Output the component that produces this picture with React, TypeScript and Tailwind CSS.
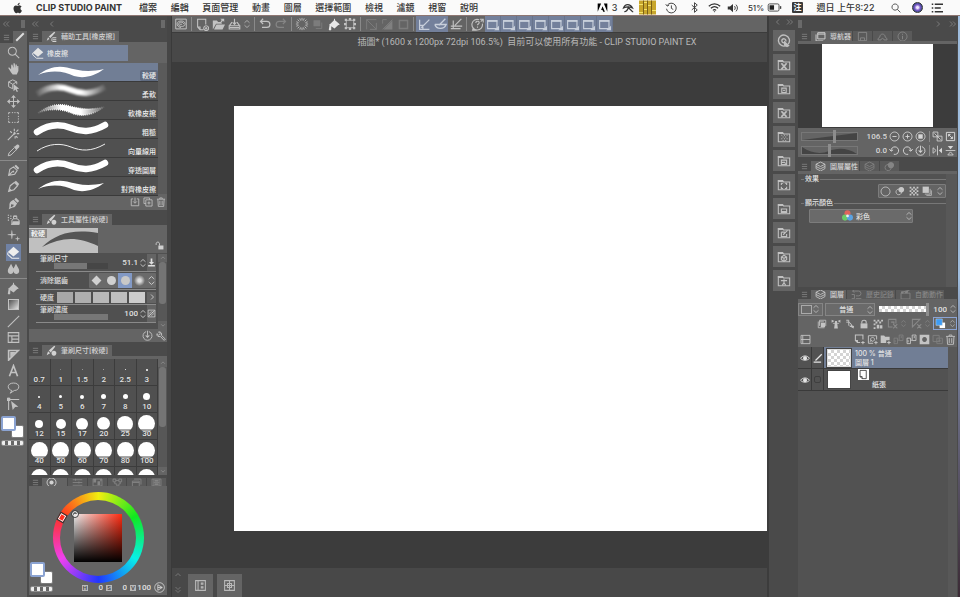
import { useState, type ReactNode } from "react";
import clsx from "clsx";

type Glyph = { s?: string; f?: string; w?: number };

// 16x16 grid: s = stroked path, f = filled path
const GLYPHS: Record<string, Glyph> = {
  apple: { f: "M11.3 8.500c0-1.700 1.400-2.500 1.500-2.600-.9-1.200-2.100-1.400-2.600-1.400-1.100-.1-2.100.7-2.700.7s-1.400-.7-2.300-.6C3.500 4.600 2 6 2 8.800 2 11.500 4 15 5.600 15c.9 0 1.200-.6 2.300-.6s1.400.6 2.300.6c1.300 0 2.600-2.200 3-3.700-.1 0-1.900-.8-1.900-2.800zM9.500 3.300c.5-.6.9-1.400.8-2.300-.8 0-1.700.5-2.200 1.200-.5.5-.9 1.400-.8 2.200.8.1 1.700-.5 2.200-1.100z" },
  adobe: { f: "M1 2h5L1 14zM15 2h-5l5 12zM8 6l3.500 8H9l-1-2.500H6z" },
  umbrella: { s: "M2 8C4 2 11 2 14 8c-4-2-8-2-12 0zM9 6c-1 4-3 7-6 7M9 8l5 5h1", w: 1.6 },
  clock: { s: "M3 4.500A6.500 6.500 0 1 1 2 9M1 3l2 2.500L5.500 4M8.500 4.500V8.500L11 10" },
  bluetooth: { s: "M4 4.500l8 7L8 15V1l4 3.500-8 7", w: 1.3 },
  wifi: { s: "M1 6.500c4-4 10-4 14 0M3.500 9c3-2.800 6-2.800 9 0M6 11.500c1.300-1.200 2.700-1.200 4 0", f: "M7 12.500h2L8 14z", w: 1.5 },
  volume: { f: "M1 6h3l4-3.500v11L4 10H1z", s: "M10 5.500c1.300 1.500 1.300 3.500 0 5M12 3.500c2.500 2.500 2.500 6.500 0 9" },
  search: { s: "M6.500 1.500a5 5 0 1 0 .1 0M10 10l5 5", w: 1.3 },
  list: { s: "M5 3h11M5 8h8M5 13h11M1 3h2M1 8h2M1 13h2", w: 1.8 },
  menu: { s: "M2 3h12M2 8h12M2 13h12", w: 1.5 },
  left: { s: "M10 3L5 8l5 5", w: 1.5 },
  right: { s: "M6 3l5 5-5 5", w: 1.5 },
  up: { s: "M3 10l5-5 5 5", w: 1.7 },
  down: { s: "M3 6l5 5 5-5", w: 1.7 },
  left2: { s: "M8 3L3 8l5 5M14 3L9 8l5 5", w: 1.5 },
  right2: { s: "M2 3l5 5-5 5M8 3l5 5-5 5", w: 1.5 },
  down2: { s: "M3 2l5 5 5-5M3 8l5 5 5-5", w: 1.5 },
  updown: { s: "M3 5.500L8 1l5 4.500M3 10.500L8 15l5-4.500", w: 1.5 },
  hand: { f: "M5 9L2.500 6.500 1.500 7.500 5 13l2 2.500h5L14 11V5h-1.500v3L12 3h-1.500v4.500L9.500 1.500H8L8 7.500 6.500 3 5.200 3.500z" },
  cube: { s: "M7 1l5 2.500v3M7 1L2 3.500v6L7 12V6.500L2 3.500M7 6.500l5-3", f: "M8 6l7 6-3 .3 1.500 3-1.500.7-1.500-3L8 15z" },
  move: { s: "M8 2v12M2 8h12", f: "M8 0l3 3.500H5zM8 16l3-3.500H5zM0 8l3.500-3v6zM16 8l-3.500-3v6z" },
  marquee: { s: "M2 4V2h2M6 2h1.500M9 2h1.500M12 2h2v2M14 6v1.500M14 9v1.500M14 12v2h-2M10.500 14H9M7.500 14H6M4 14H2v-2M2 10.500V9M2 7.500V6" },
  wand: { s: "M1 15L9 7M9 1v3M4 4l2 2M15 7h-3M14 2l-2.500 2.500M10 10v3M13 12l-2-2", f: "M7.500 6L9.500 4.500 11 6.500 9.500 8.500z", w: 1.4 },
  dropper: { s: "M8.500 5L2.500 11l-1 3.500L5 13.500l6-6", f: "M8 3.500l1.500-.5L12 1c2-1 4 1 3 3l-2.500 2.500L12 8z", w: 1.2 },
  pen: { s: "M2 14l1.500-7.500L8 3.500 12.500 8l-3 4.500zM2 14l5-5", f: "M9 2.500L11 1l4 4-1.500 2zM6.500 8.500l2-.5.500 2-2 .5z", w: 1.3 },
  pencil: { s: "M2 14l2-7 5-4 4 4-4.500 5z", f: "M9 2.500L11 1l4 4-1.500 2zM2 14l1.300-4 3 3z", w: 1.4 },
  brush: { f: "M9 3l2-2 4 4-2 2zM3 9c0-3 3-4 5-5.500l4.500 4.500C11 10 10 13 7 13l-5 2c1-1 1-3 1-6zM5 9c0 2 0 2.500-.5 3.500C7 12 8 11 8.500 9.500z" },
  airbrush: { s: "M5 14h10v-4c0-2-2-3-5-3s-4 1-4 3v4M8 7V4h4v3", f: "M7 10h8v4H6zM8 3h4v1.500H8zM1 2h1.500v1.500H1zM4 3h1.500v1.500H4zM1 5h1.500v1.500H1zM4 6h1.500v1.500H4zM1 8h1.500v1.500H1z" },
  sparkle: { f: "M6 1l.8 5.200L12 7l-5.200.8L6 13l-.8-5.200L0 7l5.200-.8zM13 9l.5 2.500L16 12l-2.500.5L13 15l-.5-2.500L10 12l2.500-.5z", s: "M6 2v10M1 7h10M13 9.500v5M10.500 12h5", w: 0.7 },
  eraser: { f: "M8 1l7 6-7 6-7-5.500z", s: "M1 8v2.500L6 15h9", w: 1.3 },
  blend: { f: "M5 2C3 6 1 8 1 11c0 5 7 5 7 0 0 5 7 5 7 0 0-3-2-5-4-9-1 2-2 4-3 6C7 6 6 4 5 2z" },
  bucket: { f: "M2 8l6-6 6 5.500-6 5.500-4-3v4c0 1.500-3 1.500-3 0z", s: "M8 1v5M2 8h12", w: 1.2 },
  line: { s: "M1 15L15 1", w: 1.3 },
  frame: { s: "M1.500 2h13v12h-13zM1.500 6h13M6 6v8M6 10h8.500", w: 1.3 },
  ruler: { s: "M2 3h12L2 15zM5 6h3L5 9z", w: 2 },
  text: { s: "M3 15L8 2l5 13M5 10.500h6", w: 2 },
  balloon: { s: "M8 2.500C4 2.500 1.500 4.500 1.500 7S4 11.500 6 11.700L4 15l5-3.300c3.500 0 5.500-2 5.500-4.700S12 2.500 8 2.500z", w: 1.2 },
  operate: { s: "M2 1v15M2 3h13", f: "M0 1h4v4H0zM5 5l9 7-4 .3L7 16z", w: 1.3 },
  subtool: { f: "M1 14l2-5 2 2.500zM4 8l8-7 1.500 1L6.500 10zM8 9h7v1.500H8zM10 12h5v1.500h-5zM8 9h1.300v7H8zM8 14.700h7V16H8z" },
  brushdot: { f: "M1 15l2-6 3 3zM4 8l8-7 1.500 1L7 11zM11.500 8.500a3.500 3.500 0 1 0 .1 0z" },
  spiral: { s: "M1 1.500h14v13H1zM11.500 8c0-3-6-3.500-6.500 0s5 4 7 2.500c3-2.500 1-6.500-3.500-6.500S2.500 6.500 3 9s3 3.500 5 3.500M9 9c0-1.500-2-1.500-2 0", w: 1.3 },
  filenew: { s: "M9 14.500H5L2 11V1.500h10V8M2 11h3v3.500M12.500 9.500a3 3 0 1 0 .1 0M12.500 11v3M11 12.500h3", w: 1.3 },
  open: { f: "M1 14V3h5l1.500 2H12v2H5zM5.500 8H16l-3 6H2.500zM10 1l5 0 0 4-1.500-1.500-2 2L10.500 4 12 2.500z" },
  save: { s: "M2 9l3-4M14 9l-3-4M1.500 9.500h13v4h-13zM8 1v6", f: "M5 5.500h6L8 9zM2 11h12v1.200H2z", w: 1.4 },
  undo: { s: "M2 4.500h8.500a4 4 0 0 1 0 8H4M5.500 1L2 4.500 5.500 8", w: 1.6 },
  redo: { s: "M14 4.500H5.500a4 4 0 0 0 0 8H12M10.500 1L14 4.500 10.500 8", w: 1.6 },
  dots: { s: "M8 1v3M8 12v3M1 8h3M12 8h3M3 3l2 2M11 11l2 2M13 3l-2 2M5 11l-2 2M5.500 1.500l.8 2.500M10.500 1.500l-.8 2.500M5.500 14.500l.8-2.500M10.500 14.500l-.8-2.500M1.500 5.500l2.500.8M1.500 10.500l2.500-.8M14.500 5.500l-2.500.8M14.500 10.500l-2.500-.8", w: 1 },
  copyout: { f: "M2 3h9v8H2z", s: "M13 6v8H5", w: 1.2 },
  transform: { s: "M3 3h10v10H3z", f: "M1 1h3v3H1zM12 1h3v3h-3zM1 12h3v3H1zM12 12h3v3h-3zM6.500 0h3v3h-3zM6.500 13h3v3h-3zM0 6.500h3v3H0zM13 6.500h3v3h-3z", w: 1.2 },
  desel: { s: "M2 14V2h12M2 2l12 12M14 6v8H6", w: 1 },
  invsel: { f: "M14 3v11H3z", s: "M2 2h5M2 2v5M14 2L2 14", w: 1 },
  selbox: { s: "M3 3h10v10H3z", w: 1.8 },
  snap1: { s: "M2 2v12h12M4 12L14 2M2 9h4v5", w: 1.5 },
  snap2: { s: "M1 8c2 6 11 7 14 0H1M6 9l8-8", w: 1.6 },
  snap3: { s: "M4 3v10M1 10h14M6 9l8-8M1 13h12", w: 1.4 },
  help: { s: "M10 2.200A6.500 6.500 0 1 0 14 7M3 11.500L2 15h5M6 6c0-3 4.500-2.500 4 0-.3 1.500-2 1.500-2 3M8 10.500V12M11 1.500h4v4M15 1.500L12 4.500", w: 1.4 },
  screen: { s: "M2 3.500h11.500v9.500H2z", f: "M10 15h6V9.500zM1.500 2.500h12.500v2H1.500z", w: 1.4 },
  dl: { s: "M2 3h3M11 3h3v11H2V3M8 1v8M5 7l3 3 3-3", w: 1.3 },
  dup: { s: "M1.500 1.500h9v3M1.500 1.500v9h3M4.500 4.500h10v10h-10zM9.500 7v5M7 9.500h5", w: 1.3 },
  trash: { s: "M1.500 3.500h13M6 3V1.500h4V3M3 4l.7 11h8.600L13 4M6.200 6v7M9.800 6v7", w: 1.3 },
  unlock: { s: "M2 7V5c0-4 6-4 6 0v3", f: "M6 8h9v7H6z", w: 1.6 },
  stamp: { f: "M6.500 1h3v6h3L8 12 3.500 7h3zM2 12.500h12V15H2z" },
  nocircle: { s: "M2 2h12v12H2zM3 13L13 3M8 5a3 3 0 1 0 .1 0", w: 1.2 },
  reset: { s: "M10 2.300A6.500 6.500 0 1 1 6 2.300M8 8V1", f: "M4.500 8h7L8 11.500z", w: 1.3 },
  wrench: { s: "M4 1.500L7 4.500 4.500 7 1.500 4.200C.5 8 4 10 7 8.700L13 15l2-2-6.300-6C10 4 7.500.5 4 1.500z", w: 1.5 },
  rings: { s: "M8 1.500a6.500 6.500 0 1 0 .1 0", f: "M8 5a3 3 0 1 0 .1 0", w: 1.4 },
  sliders: { s: "M1 4h14M1 8h14M1 12h14M5 2.500v3M10 6.500v3", w: 1.2 },
  swatch: { s: "M1.500 3h13v10h-13z", f: "M2 3h4v5H2zM8 6h4v6H8zM12 3h2v3h-2z", w: 1.2 },
  nodes: { s: "M1.500 3h4v4h-4zM10 3h4v4h-4zM5.500 5h4.500M4 7v3h3v3h3v-3h2V7", w: 1.3 },
  stack: { s: "M4.500 3h10v8M2 6h10v8H2zM2 8h10", w: 1.3 },
  film: { s: "M1.500 3h13v10h-13zM4 3v10M12 3v10M4 8h8", f: "M5 4h6v3H5zM5 9h6v3H5z", w: 1.2 },
  play: { s: "M8 1a7 7 0 1 0 .1 0M5.500 4L12 8l-6.500 4zM5.500 8H12", w: 1.1 },
  quick: { s: "M12.800 11.500A6.300 6.300 0 1 0 11 13M10 8.500A2.300 2.300 0 1 0 8 10", f: "M8 7.500l6.500 6-3 1.500-3.500-2z", w: 1.5 },
  nav: { s: "M4 2.500h10.500v9H4zM1.500 5v9.500h10.500M4 4.500h10.500", w: 1.4 },
  subview: { s: "M2 2h12v12H2zM5 14v-4h6v4", w: 1.4 },
  info: { s: "M8 1.500a6.500 6.500 0 1 0 .1 0M8 7v5M8 4v1.500", w: 1.4 },
  arch: { s: "M1.500 13v-2L4 9c0-6 8-6 8 0l2.500 2v2H10c0-3-4-3-4 0z", w: 1.4 },
  minusc: { s: "M8 1.500a6.500 6.500 0 1 0 .1 0M5 8h6", w: 1.3 },
  plusc: { s: "M8 1.500a6.500 6.500 0 1 0 .1 0M5 8h6M8 5v6", w: 1.3 },
  fitc: { s: "M8 1.500a6.500 6.500 0 1 0 .1 0", f: "M4.800 4.800h6.400v6.400H4.800z", w: 1.3 },
  fit: { s: "M1.500 1.500h7v7h-7zM7.500 7.500h7v7h-7zM3.500 3.500l9 9", w: 1.2 },
  corner: { s: "M2 2h12v12H2zM5 5l6 6M5 8V5h3M8 11h3V8", w: 1.4 },
  rotl: { s: "M7 13.500A5.500 5.500 0 1 0 3 8.500M.5 6L3 9l3-2", w: 1.4 },
  rotr: { s: "M9 13.500A5.500 5.500 0 1 1 13 8.500M15.500 6L13 9l-3-2", w: 1.4 },
  fliph: { s: "M8 1v14M1.500 4v8L6 8z", f: "M14.500 4v8L10 8z", w: 1.2 },
  flipv: { s: "M1 8h14M4 14.500h8L8 10z", f: "M4 1.500h8L8 6z", w: 1.2 },
  layers: { s: "M8 1.500l6.500 3.200L8 8 1.500 4.700zM1.500 8L8 11.300 14.500 8M1.500 11L8 14.500 14.500 11M1.500 4.700V11M14.500 4.700V11", w: 1.1 },
  circle: { s: "M8 1.500a6.500 6.500 0 1 0 .1 0", w: 1.3 },
  tone: { s: "M6 5a4.500 4.500 0 1 0 .1 0", f: "M10 1.500a4.500 4.500 0 1 0 .1 0", w: 1.3 },
  checker: { f: "M1 1h2.800v2.800H1zM6.600 1h2.800v2.800H6.600zM12.200 1H15v2.800h-2.800zM3.800 3.800h2.800v2.800H3.800zM9.400 3.800h2.800v2.800H9.400zM1 6.600h2.800v2.800H1zM6.600 6.600h2.800v2.800H6.600zM12.200 6.600H15v2.800h-2.800zM3.800 9.400h2.800v2.800H3.800zM9.400 9.400h2.800v2.800H9.400zM1 12.200h2.800V15H1zM6.600 12.200h2.800V15H6.600zM12.200 12.200H15V15h-2.800z" },
  layercolor: { f: "M1 1h10v10H1z", s: "M13 4.500v8.500H4.500M15 7v8H7", w: 1.2 },
  history: { s: "M3 3h8a3.500 3.500 0 0 1 0 7H7M5 1L2 3l3 2M1 8h4v6H1M7 14h8", w: 1.3 },
  clap: { s: "M1.500 6h13v8.500h-13zM1.500 5L14 1.500", f: "M1.500 3.500h4l-1 3h-3zM8 3h4l-1 3H7z", w: 1.3 },
  clip: { f: "M6 6h7v7H6z", s: "M4 2h10v9M4 4.500h7M2 4v10h10M4 2v9", w: 1.3 },
  lighthouse: { f: "M6.500 3h3l1.500 12H5zM1 1l4.500 2L1 6zM15 1l-4.500 2L15 6z", s: "M3 7h10" },
  draft: { s: "M2 2h4v8l2 2h6M6 5l4 3v3M2 5h4", f: "M9 9l5 2v4l-4-2z", w: 1.5 },
  lock: { s: "M4.500 7V5c0-4 7-4 7 0v2", f: "M2.500 7h11v8h-11z", w: 1.7 },
  lockpx: { f: "M1 1h3v3H1zM7 1h3v3H7zM4 4h3v3H4zM10 4h3v3h-3zM13 1h3v3h-3zM1 7h3v3H1zM6 9h4v6H6zM1 13h3v3H1zM11 10h4v5h-4z" },
  masksel: { s: "M2 2h11v6M2 2v11h6M6 6h4v3M9 9l6 6M15 9l-6 6", w: 1.5 },
  rulersel: { s: "M2 2h11L2 13zM9 9l6 6M15 9l-6 6", w: 1.5 },
  split: { s: "M1.500 2h13v12h-13zM1.500 8h13M4 2v12", w: 1.3 },
  newlayer: { s: "M9 12.500H5l-3-3v-8h11V8M13 10v5M10.500 12.500h5M2 9.500h3v3", w: 1.5 },
  newvec: { s: "M9 13.500H2v-11h12V8M13 10v5M10.500 12.500h5M8 5a2.800 2.800 0 1 0 .1 0M4 11l3-2", w: 1.4 },
  newfolder: { f: "M1 13V2h5l1.500 2H14v5H9v4z", s: "M13 10v5M10.500 12.500h5", w: 1.5 },
  transfer: { s: "M1.500 6h5v8h-5zM9 1.500h5.500v8H9zM6.500 9H9M3 9v3M12 3v3", w: 1.3 },
  mask: { f: "M1 1h14v14H1zM8 4.500a3.500 3.500 0 1 0 .1 0z" },
  applymask: { s: "M1.500 2h9v9h-9zM7 6h8v8H7zM11 8v4M9 10h4", w: 1.3 },
  eye: { s: "M1 8.500C4 3.500 12 3.500 15 8.500 12 12.500 4 12.500 1 8.500z", f: "M8 5a3.200 3.200 0 1 0 .1 0", w: 1.5 },
  edit: { s: "M1 14.500h12M4 12L14 2", w: 2 },
  nib: { s: "M2 14L14 2", w: 3 },
  paper: { s: "M3 2h9v12H6l-3-3zM3 11h3v3", w: 1.2 },
  timeline: { s: "M2 2h12v12H2zM5 2v12M9 5h2v1.500H9zM9 9.500h2V11H9z", w: 1.3 },
  grid: { s: "M2 2h12v12H2zM8 2v12M2 8h12M5.500 5.500h5v5h-5z", w: 1.3 },
};

const NUM = "[font-family:Roboto,sans-serif] text-[8px]";

function Icon({ name, className = "size-3" }: { name: string; className?: string }) {
  const g = GLYPHS[name];
  return (
    <svg viewBox="0 0 16 16" className={clsx("shrink-0", className)} aria-hidden="true">
      {g.s && <path d={g.s} fill="none" stroke="currentColor" strokeWidth={g.w ?? 1.2} />}
      {g.f && <path d={g.f} fill="currentColor" fillRule="evenodd" />}
    </svg>
  );
}

function IconButton({ name, label, className, icon }: { name: string; label: string; className?: string; icon?: string }) {
  return (
    <button aria-label={label} className={clsx("flex shrink-0 items-center justify-center", className)}>
      <Icon name={name} className={icon} />
    </button>
  );
}

const MENUS = ["檔案", "編輯", "頁面管理", "動畫", "圖層", "選擇範圍", "檢視", "濾鏡", "視窗", "說明"];

function MenuBar() {
  return (
    <header className="flex h-[16px] shrink-0 items-center justify-between border-b border-[#8d7672] bg-[#fafafa] pr-[15px] text-[9px] leading-[14px] text-[#333]">
      <nav className="flex items-center">
        <IconButton name="apple" label="Apple" className="w-[36px] text-[#333]" icon="size-[12px]" />
        <button className="w-[103px] text-left text-[9px] font-bold whitespace-nowrap">CLIP STUDIO PAINT</button>
        <div className="flex w-[339px] justify-between">
          {MENUS.map((m) => (
            <button key={m} className="whitespace-nowrap">{m}</button>
          ))}
        </div>
      </nav>
      <div className="flex items-center [&>*]:flex [&>*]:items-center [&>*]:justify-center">
        <span className="w-[20px] gap-1"><Icon name="adobe" className="size-[11px] text-black" />3</span>
        <span className="w-[22px]"><Icon name="umbrella" className="size-[12px]" /></span>
        <span className="w-[17px]">
          <svg viewBox="0 0 17 14" className="h-[15px] w-[17px]" aria-hidden="true">
            <rect width="17" height="14" fill="#c8a62c" />
            <path d="M4.500 0v14M8.500 0v14M12.500 0v14" stroke="#7a6018" strokeWidth="1" />
            <path d="M0 4h4M5 9h3M9 5h3M13 10h4M0 12h4M5 2h3" stroke="#f3e36a" strokeWidth="1" />
          </svg>
        </span>
        <span className="w-[30px]"><Icon name="clock" className="size-[12px]" /></span>
        <span className="w-[16px]"><Icon name="bluetooth" className="size-[11px]" /></span>
        <span className="w-[24px]"><Icon name="wifi" className="size-[13px]" /></span>
        <span className="w-[14px]"><Icon name="volume" className="size-[12px]" /></span>
        <span className="w-[50px] gap-[3px] text-[8px]">
          51%
          <svg viewBox="0 0 16 10" className="h-[9px] w-[15px]" aria-hidden="true">
            <rect x="1" y="1" width="12" height="8" rx="1.500" fill="none" stroke="#444" />
            <rect x="2.500" y="2.500" width="5" height="5" fill="#222" />
            <rect x="14" y="3.500" width="1.500" height="3" fill="#444" />
          </svg>
        </span>
        <span className="w-[15px]"><b className="size-[11px] rounded-[1px] bg-[#3a3a3a] text-center text-[8px] leading-[11px] text-white">注</b></span>
        <span className="w-[81px] whitespace-nowrap">週日 上午8:22</span>
        <button aria-label="搜尋" className="w-[19px]"><Icon name="search" className="size-[10px]" /></button>
        <button aria-label="Siri" className="w-[24px]">
          <span className="size-[11px] rounded-full border border-[#333] bg-[radial-gradient(circle,#f0e8ff_15%,#7a58c8_45%,#2a4a80_80%)]" />
        </button>
        <button aria-label="通知中心" className="w-[16px]"><Icon name="list" className="size-[12px]" /></button>
      </div>
    </header>
  );
}

function Tab({ icon, children, active, className }: { icon: string; children?: ReactNode; active?: boolean; className?: string }) {
  return (
    <button className={clsx("flex items-center gap-[4px] overflow-hidden border-r border-[#4a4a4a] px-[4px] whitespace-nowrap", active ? "bg-[#646464] text-[#d2d2d2]" : "bg-[#5a5a5a] text-[#858585]", className)}>
      <Icon name={icon} className="size-[11px]" />
      {children}
    </button>
  );
}

function TabRow({ children, className }: { children: ReactNode; className?: string }) {
  return (
    <div className={clsx("flex shrink-0 items-stretch border-b-[3px] border-[#646464] bg-[#4a4a4a] text-[7px]", className)}>
      <IconButton name="menu" label="面板選單" className="w-[13px] text-[#909090]" icon="size-[7px]" />
      {children}
    </div>
  );
}

const TOOLS = [
  [["search", "放大鏡"], ["hand", "移動"], ["cube", "操作"], ["move", "移動圖層"], ["marquee", "選擇範圍"], ["wand", "自動選擇"], ["dropper", "吸管"]],
  [["pen", "沾水筆"], ["pencil", "鉛筆"], ["brush", "毛筆"], ["airbrush", "噴槍"], ["sparkle", "裝飾"], ["eraser", "橡皮擦"], ["blend", "色彩混合"]],
  [["bucket", "填充"], ["gradient", "漸層"], ["line", "圖形"], ["frame", "分格邊框"], ["ruler", "尺規"], ["text", "文字"], ["balloon", "對話框"], ["operate", "線修正"]],
];

function ColorChips() {
  return (
    <div className="flex w-[25px] flex-col items-center gap-[2px]">
      <div className="relative h-[22px] w-[23px]">
        <button aria-label="副顏色" className="absolute right-0 bottom-0 size-[13px] rounded-[2px] border border-[#7c7c7c] bg-white" />
        <button aria-label="主顏色" className="absolute top-0 left-0 size-[15px] rounded-[2px] border-2 border-[#8ba3d2] bg-white" />
      </div>
      <button aria-label="透明色" className="h-[6px] w-[23px] rounded-[2px] border border-[#8d8d8d] bg-[repeating-linear-gradient(90deg,#eee_0_3px,#666_3px_6px)]" />
    </div>
  );
}

function ToolColumn() {
  const [tool, setTool] = useState("eraser");
  return (
    <aside className="flex w-[27px] shrink-0 flex-col bg-[#646464]">
      <div className="flex h-[15px] shrink-0 items-center justify-between bg-[#4a4a4a] px-[2px] text-[#8a8a8a]">
        <IconButton name="left2" label="收合" icon="size-[8px]" />
        <span className="h-[8px] w-[4px] bg-[#6a6a6a]" />
      </div>
      <div className="flex h-[12px] shrink-0 bg-[#4a4a4a]">
        <IconButton name="menu" label="面板選單" className="w-[13px] text-[#909090]" icon="size-[7px]" />
        <IconButton name="nib" label="工具" className="flex-1 bg-[#646464] text-[#ddd]" icon="size-[10px]" />
      </div>
      {TOOLS.map((group, i) => (
        <div key={i} className={clsx("flex flex-col items-center py-[1px]", i === 2 ? "h-[134px]" : "h-[118px] border-b border-[#8a8a8a]")}>
          {group.map(([name, label]) => (
            <button
              key={name}
              aria-label={label}
              aria-pressed={tool === name}
              onClick={() => setTool(name)}
              className={clsx("flex w-[15px] flex-1 items-center justify-center text-[#c2c2c2]", tool === name && "bg-[#7082a5] text-[#eee]")}
            >
              {name === "gradient" ? (
                <span className="size-[11px] border border-[#c2c2c2] bg-linear-to-br from-[#555] to-[#e0e0e0]" />
              ) : (
                <Icon name={name} className="size-[13px]" />
              )}
            </button>
          ))}
        </div>
      ))}
      <div className="pt-[3px]"><ColorChips /></div>
    </aside>
  );
}

const THICK = "M8 12C20 4 32 4 42 8S62 13 76 5";
const TAPER = "M9 12C18 5 28 2 38 4.500 48 7 58 10 75 6 66 13 55 16 45 13 36 9 24 6 9 12z";

const BRUSHES = [
  { name: "較硬", kind: "taper" },
  { name: "柔軟", kind: "soft" },
  { name: "軟橡皮擦", kind: "grain" },
  { name: "粗糙", kind: "thick" },
  { name: "向量線用", kind: "thin" },
  { name: "穿透圖層", kind: "thick" },
  { name: "對齊橡皮擦", kind: "taper" },
];

function Stroke({ kind }: { kind: string }) {
  return (
    <svg viewBox="0 0 84 18" className="h-[18px] w-[84px]" aria-hidden="true">
      <defs>
        <filter id="soft" x="-20%" y="-50%" width="140%" height="200%"><feGaussianBlur stdDeviation="1.2" /></filter>
        <linearGradient id="fade">
          <stop offset="0" stopColor="#fff" stopOpacity="0.1" />
          <stop offset="0.35" stopColor="#fff" />
          <stop offset="0.65" stopColor="#fff" />
          <stop offset="1" stopColor="#fff" stopOpacity="0.1" />
        </linearGradient>
      </defs>
      {kind === "taper" && <path d={TAPER} fill="#fff" />}
      {kind === "soft" && <path d={THICK} fill="none" stroke="url(#fade)" strokeWidth="6" filter="url(#soft)" />}
      {kind === "grain" && (
        <>
          <path d={TAPER} fill="url(#fade)" />
          <path d={TAPER} fill="none" stroke="url(#fade)" strokeWidth="1.5" strokeDasharray="1 1" />
        </>
      )}
      {kind === "thick" && <path d={THICK} fill="none" stroke="#fff" strokeWidth="6.5" strokeLinecap="round" />}
      {kind === "thin" && <path d={THICK} fill="none" stroke="#eee" strokeWidth="1" />}
    </svg>
  );
}

function SubToolPanel() {
  const [brush, setBrush] = useState(0);
  return (
    <section>
      <TabRow className="h-[14px]"><Tab icon="subtool" active>輔助工具[橡皮擦]</Tab></TabRow>
      <div className="bg-[#646464] pb-[2px]">
        <button className="flex h-[16px] w-[99px] items-center gap-[3px] bg-[#76839b] px-[3px] text-[#e4e4e4]">
          <Icon name="eraser" className="size-[12px]" />橡皮擦
        </button>
      </div>
      <div className="flex h-[131px] bg-[#5a5a5a]">
        <ul className="flex flex-1 flex-col">
          {BRUSHES.map((b, i) => (
            <li key={b.name} className="flex flex-1 border-b border-[#3a3a3a]">
              <button onClick={() => setBrush(i)} className={clsx("flex h-full flex-1 items-end justify-between overflow-hidden text-[#eee]", brush === i ? "bg-[#717e95]" : "bg-[#505050]")}>
                <Stroke kind={b.kind} />
                <span className={clsx("px-[2px] whitespace-nowrap", brush === i && "rounded-[2px] bg-[#5f6b80]")}>{b.name}</span>
              </button>
            </li>
          ))}
        </ul>
        <div className="w-[9px]" />
      </div>
      <div className="flex h-[16px] items-center justify-end gap-[3px] bg-[#646464] pr-[1px] text-[#c4c4c4]">
        <IconButton name="dl" label="匯入" icon="size-[10px]" />
        <IconButton name="dup" label="複製" icon="size-[10px]" />
        <IconButton name="trash" label="刪除" icon="size-[10px]" />
      </div>
    </section>
  );
}

function ScrollBar({ thumb }: { thumb: string }) {
  return (
    <div className="flex w-[9px] shrink-0 flex-col items-center justify-between bg-[#575757] text-[#9a9a9a]">
      <IconButton name="up" label="向上捲動" className="h-[8px] w-full bg-[#646464]" icon="size-[6px]" />
      <div className="flex w-full flex-1 justify-center"><span className={clsx("w-[7px] rounded-[3px] bg-[#747474]", thumb)} /></div>
      <IconButton name="down" label="向下捲動" className="h-[8px] w-full bg-[#646464]" icon="size-[6px]" />
    </div>
  );
}

const HIDDEN_THUMB = "[&::-webkit-slider-thumb]:h-[4px] [&::-webkit-slider-thumb]:w-0 [&::-webkit-slider-thumb]:appearance-none";

function NumberSlider({ label, value, fill, icon }: { label: string; value: string; fill: string; icon: string }) {
  return (
    <div className="flex h-[18px] items-stretch border-b border-[#8a8a8a]">
      <label className="flex flex-1 flex-col pl-[4px] leading-[9px]">
        {label}
        <input type="range" aria-label={label} className={clsx("ml-[14px] h-[6px] w-[54px] appearance-none", fill, HIDDEN_THUMB)} />
      </label>
      <input aria-label={`${label}數值`} defaultValue={value} className={clsx("w-[24px] text-right", NUM)} />
      <IconButton name="updown" label={`調整${label}`} className="w-[9px]" icon="size-[8px]" />
      <IconButton name={icon} label={`${label}設定`} className="w-[9px] bg-[#646464]" icon="size-[9px]" />
    </div>
  );
}

function ToolPropertyPanel() {
  return (
    <section className="mt-[4px]">
      <TabRow className="h-[14px]"><Tab icon="brushdot" active>工具屬性[較硬]</Tab></TabRow>
      <div className="flex h-[25px] items-end justify-between bg-[#646464]">
        <div className="relative h-[25px] w-[69px] bg-[#c0c0c0]">
          <svg viewBox="0 0 69 25" className="size-full" aria-hidden="true">
            <path d="M13 19C28 5 44 1 69 5v13C48 8 33 9 13 19z" fill="#555" />
          </svg>
          <span className="absolute top-px left-0 bg-[#8a8a8a] px-[2px] leading-[9px] text-white">較硬</span>
        </div>
        <IconButton name="unlock" label="解除鎖定" className="p-[3px] text-[#d0d0d0]" icon="size-[9px]" />
      </div>
      <div className="flex h-[76px] overflow-hidden bg-[#505050] pt-[1px] text-[#e0e0e0]">
        <div className="flex flex-1 flex-col pr-[2px] pl-[7px]">
          <NumberSlider label="筆刷尺寸" value="51.1" icon="stamp" fill="bg-linear-to-r from-[#777] from-62% to-[#464646] to-62%" />
          <div className="flex h-[18px] items-center justify-between border-b border-[#8a8a8a] pl-[4px]">
            消除鋸齒
            <div className="flex h-[15px] items-center rounded-[1px] bg-[#6a6a6a] text-[#d6d6d6]">
              <button aria-label="無" className="flex w-[15px] justify-center"><span className="size-[7px] rotate-45 bg-[#d0d0d0]" /></button>
              <button aria-label="弱" className="flex w-[14px] justify-center"><span className="size-[9px] rounded-full bg-[#d0d0d0]" /></button>
              <button aria-label="中" className="flex h-full w-[14px] items-center justify-center bg-[#8299c5]"><span className="size-[9px] rounded-full bg-[#c8c8c8]" /></button>
              <button aria-label="強" className="flex w-[14px] justify-center"><span className="size-[11px] rounded-full bg-[radial-gradient(circle,#ddd_20%,#6a6a6a_72%)]" /></button>
              <IconButton name="updown" label="選擇消除鋸齒" className="w-[10px]" icon="size-[9px]" />
            </div>
          </div>
          <div className="flex h-[15px] items-center justify-between border-b border-[#8a8a8a] pl-[4px]">
            硬度
            <div className="flex gap-[2px]">
              {["bg-[#a8a8a8]", "bg-[#afafaf]", "bg-[#b8b8b8]", "bg-[#bebebe]", "bg-[#cccccc]"].map((c, i) => (
                <button key={c} aria-label={`硬度 ${i + 1}`} className={clsx("h-[11px] w-[16px]", c)} />
              ))}
              <IconButton name="right" label="更多硬度" className="w-[9px] bg-[#646464]" icon="size-[8px]" />
            </div>
          </div>
          <NumberSlider label="筆刷濃度" value="100" icon="nocircle" fill="bg-[#777]" />
        </div>
        <ScrollBar thumb="h-[42px]" />
      </div>
      <div className="flex h-[13px] items-center justify-end gap-[3px] bg-[#646464] pr-[1px] text-[#c4c4c4]">
        <IconButton name="reset" label="恢復初始設定" icon="size-[11px]" />
        <IconButton name="wrench" label="詳細設定" icon="size-[10px]" />
      </div>
    </section>
  );
}

// [label, dot size]
const SIZES: [string, string][] = [
  ["0.7", "size-[0px]"], ["1", "size-px opacity-40"], ["1.5", "size-px opacity-50"], ["2", "size-px opacity-60"], ["2.5", "size-px"], ["3", "size-[2px]"],
  ["4", "size-[2px]"], ["5", "size-[3px]"], ["6", "size-[4px]"], ["7", "size-[5px]"], ["8", "size-[5px]"], ["10", "size-[7px]"],
  ["12", "size-[8px]"], ["15", "size-[10px]"], ["17", "size-[12px]"], ["20", "size-[13px]"], ["25", "size-[16px]"], ["30", "size-[17px]"],
  ["40", "size-[17px]"], ["50", "size-[17px]"], ["60", "size-[17px]"], ["70", "size-[17px]"], ["80", "size-[17px]"], ["100", "size-[17px]"],
];

function BrushSizePanel() {
  return (
    <section className="mt-[3px]">
      <TabRow className="h-[14px]"><Tab icon="brushdot" active>筆刷尺寸[較硬]</Tab></TabRow>
      <div className="flex h-[116px] overflow-hidden bg-[#505050]">
        <div className="grid flex-1 auto-rows-[27px] grid-cols-6">
          {SIZES.map(([label, dot]) => (
            <button key={label} className={clsx("relative flex items-start justify-center border-r border-b border-[#3c3c3c] text-[#e6e6e6]", NUM)}>
              <span className="flex h-[21px] items-center"><span className={clsx("rounded-full bg-white", dot)} /></span>
              <span className="absolute inset-x-0 bottom-px bg-[#505050]/50 text-center leading-[9px] text-shadow-[0_0_1px_#333]">{label}</span>
            </button>
          ))}
          {["120", "150", "170", "200", "250", "300"].map((size) => (
            <button key={size} aria-label={size} className="flex items-start justify-center border-r border-[#3c3c3c] pt-[2px]">
              <span className="size-[17px] rounded-full bg-white" />
            </button>
          ))}
        </div>
        <ScrollBar thumb="h-[60px]" />
      </div>
    </section>
  );
}

function ColorPanel() {
  return (
    <section className="mt-[3px] flex flex-1 flex-col">
      <TabRow className="h-[11px] border-b-0">
        <Tab icon="rings" active className="w-[26px]" />
        {["sliders", "swatch", "nodes", "stack", "film"].map((t) => (
          <Tab key={t} icon={t} className="flex-1 justify-center" />
        ))}
      </TabRow>
      <div className="relative flex flex-1 flex-col items-center bg-[#646464] pt-[3px]">
        <div className="relative flex size-[91px] items-center justify-center rounded-full bg-[conic-gradient(from_300deg,#ff3020,#f2ee10_60deg,#10e820_120deg,#08f0e8_180deg,#2038ff_240deg,#f040f0_300deg,#ff3020)]">
          <div className="flex size-[76px] items-center justify-center rounded-full bg-[#646464]">
            <div className="size-[48px] bg-[linear-gradient(to_top,#000,transparent),linear-gradient(to_right,#eee,#ff2a10)]" />
          </div>
          <span className="absolute top-[22px] left-[6px] h-[7px] w-[6px] rotate-30 border border-white bg-[#ff3020] outline-1 outline-[#333]" />
          <span className="absolute top-[19px] left-[19px] size-[6px] rounded-full border border-white outline-1 outline-[#444]" />
        </div>
        <div className="absolute bottom-[3px] left-0"><ColorChips /></div>
        <div className={clsx("absolute right-[2px] bottom-[2px] flex items-center gap-[3px] text-[#e0e0e0]", NUM)}>
          {[["H", "0"], ["S", "0"], ["V", "100"]].map(([k, v]) => (
            <label key={k} className="flex items-center gap-px">
              <span className="size-[6px] bg-[#b8b8b8] text-center text-[6px] leading-[6px] text-[#444]">{k}</span>
              <input defaultValue={v} className="w-[14px] text-right" />
            </label>
          ))}
          <IconButton name="play" label="切換色彩空間" icon="size-[11px]" />
        </div>
      </div>
    </section>
  );
}

function Sep() {
  return <span className="flex w-[5px] justify-center"><span className="h-[14px] w-px bg-[#8a8a8a]" /></span>;
}

function CommandBar() {
  const item = "h-[16px] w-[16px]";
  const on = "bg-[#73809b] text-[#c8cfdb]";
  return (
    <div className="flex h-[17px] shrink-0 items-center border-b border-[#3c3c3c] bg-[#646464] text-[#c2c2c2]">
      <IconButton name="spiral" label="CLIP STUDIO" className="h-[16px] w-[17px]" icon="size-[12px]" />
      <Sep />
      <IconButton name="filenew" label="新建" className={item} icon="size-[13px]" />
      <IconButton name="open" label="開啟" className={item} icon="size-[13px]" />
      <IconButton name="save" label="儲存" className={item} icon="size-[13px]" />
      <IconButton name="updown" label="更多" className="w-[10px]" icon="size-[8px]" />
      <Sep />
      <IconButton name="undo" label="還原" className={item} icon="size-[12px]" />
      <IconButton name="redo" label="重做" className={clsx(item, "text-[#858585]")} icon="size-[12px]" />
      <Sep />
      <IconButton name="dots" label="刪除" className={item} icon="size-[14px]" />
      <IconButton name="copyout" label="刪除選擇範圍外" className={clsx(item, "text-[#7c7c7c]")} icon="size-[12px]" />
      <IconButton name="bucket" label="填充" className={clsx(item, "text-[#e8e8e8]")} icon="size-[13px]" />
      <IconButton name="transform" label="變形" className={item} icon="size-[12px]" />
      <Sep />
      <IconButton name="desel" label="取消選擇" className={clsx(item, "text-[#808080]")} icon="size-[13px]" />
      <IconButton name="invsel" label="反轉選擇範圍" className={clsx(item, "text-[#808080]")} icon="size-[13px]" />
      <IconButton name="selbox" label="選擇範圍邊框" className={clsx(item, "text-[#7c7c7c]")} icon="size-[13px]" />
      <Sep />
      <IconButton name="snap1" label="對齊尺規" className={clsx(item, on)} icon="size-[13px]" />
      <IconButton name="snap2" label="對齊特殊尺規" className={clsx(item, on)} icon="size-[13px]" />
      <IconButton name="snap3" label="對齊格線" className={item} icon="size-[13px]" />
      <Sep />
      <IconButton name="help" label="說明" className={item} icon="size-[13px]" />
      {Array.from({ length: 8 }).map((_, i) => (
        <IconButton key={i} name="screen" label={`面板 ${i + 1}`} className={clsx(item, on, "border-r border-[#68748c]")} icon="size-[13px]" />
      ))}
    </div>
  );
}

function Workspace() {
  return (
    <main className="flex min-w-0 flex-1 flex-col">
      <CommandBar />
      <h1 className="h-[29px] shrink-0 bg-[#484848] pt-[2px] pl-[115px] text-center [font-family:Roboto,'Noto_Sans_CJK_TC',sans-serif] text-[9px] leading-[14px] font-normal whitespace-pre text-[#b8b8b8]">
        插圖* (1600 x 1200px 72dpi 106.5%)  目前可以使用所有功能 - CLIP STUDIO PAINT EX
      </h1>
      <div className="flex-1 bg-[#3c3c3c] pt-[44px] pb-[37px] pl-[62px]">
        <div className="h-full bg-white" />
      </div>
      <div className="flex h-[29px] shrink-0 items-end gap-[4px] bg-[#484848] text-[#b8b8b8]">
        <div className="flex h-full w-[12px] flex-col items-center justify-between py-[3px] text-[#808080]">
          <Icon name="up" className="size-[8px]" />
          <Icon name="down2" className="size-[8px]" />
        </div>
        <IconButton name="timeline" label="時間軸" className="h-[23px] w-[25px] bg-[#646464]" icon="size-[13px]" />
        <IconButton name="grid" label="格線" className="h-[23px] w-[25px] bg-[#646464]" icon="size-[13px]" />
      </div>
    </main>
  );
}

const FOLDER_MARKS = [
  "M5 6l6 7M11 6l-6 7",
  "M5.500 7h5v5h-5zM7 9.500h2",
  "M5 6l6 6.500M11 6l-6 6.500",
  "M5 6h1M8 6h1M11 6h1M6.500 8h1M9.500 8h1M5 10h1M8 10h1M11 10h1M6.500 12h1M9.500 12h1",
  "M5 7h6v5H5zM5 9.500h3M8 9l2 2",
  "M5 8V6h2M9 6h2v2M5 10v2h2M11 10v2H9",
  "M5 8h6v4H5zM5 11h6",
  "M5 7h4M5 7v5h6v-3M7 10l5-5",
  "M8 6L5 8v3l3 2 3-2V8zM5 8l3 1.500L11 8M8 9.500V13",
  "M4.500 7.500h7M8 6v4l-2 3M8 10l2 3",
];

function MaterialBar() {
  return (
    <div className="flex w-[26px] shrink-0 flex-col items-center gap-[3px] text-[#c0c0c0]">
      <div className="flex h-[11px] w-full items-center justify-between px-[3px] text-[#8a8a8a]">
        <IconButton name="left" label="展開" icon="size-[8px]" />
        <IconButton name="right2" label="收合" icon="size-[8px]" />
      </div>
      <IconButton name="quick" label="快速存取" className="h-[21px] w-[22px] bg-[#646464]" icon="size-[14px]" />
      {FOLDER_MARKS.map((d, i) => (
        <button key={d} aria-label={`素材 ${i + 1}`} className="flex h-[21px] w-[22px] items-center justify-center bg-[#646464]">
          <svg viewBox="0 0 16 16" className="size-[14px]" aria-hidden="true">
            <path d="M1.500 3h5l1 1.500h7v9h-13z" fill="none" stroke="currentColor" strokeWidth="1.2" />
            <path d="M1 2.500h5.500l1 2H1z" fill="currentColor" />
            <path d={d} fill="none" stroke="currentColor" strokeWidth={i === 0 || i === 2 ? 2 : 1.3} />
          </svg>
        </button>
      ))}
    </div>
  );
}

const NAV_THUMB = "[&::-webkit-slider-thumb]:h-[13px] [&::-webkit-slider-thumb]:w-[3px] [&::-webkit-slider-thumb]:appearance-none [&::-webkit-slider-thumb]:bg-[#8d8d8d]";

function NavRow({ label, value, position, icons, curve }: { label: string; value: string; position: number; icons: string[]; curve: string }) {
  return (
    <div className="flex h-[14px] items-center justify-between pr-px pl-[3px]">
      <div className="relative h-[9px] w-[57px] border border-[#777] bg-[#646464]">
        <svg viewBox="0 0 55 7" preserveAspectRatio="none" className="block size-full" aria-hidden="true">
          <path d={curve} fill="#444" />
        </svg>
        <input type="range" aria-label={label} defaultValue={position} className={clsx("absolute inset-0 w-full appearance-none bg-transparent", NAV_THUMB)} />
      </div>
      <div className="flex items-center gap-[2px]">
        <input aria-label={`${label}數值`} defaultValue={value} className={clsx("w-[26px] text-right", NUM)} />
        {icons.map((n, i) => (
          <IconButton key={n} name={n} label={`${label} ${i + 1}`} className={clsx(i === 3 && "ml-px border-l border-[#8a8a8a] pl-[2px]")} icon="size-[11px]" />
        ))}
      </div>
    </div>
  );
}

function NavigatorPanel() {
  return (
    <section>
      <TabRow className="h-[13px]">
        <Tab icon="nav" active className="w-[42px]">導航器</Tab>
        <Tab icon="subview" className="w-[20px]" />
        <Tab icon="arch" className="w-[20px]" />
        <Tab icon="info" className="w-[20px]" />
      </TabRow>
      <div className="flex h-[84px] justify-center bg-[#3c3c3c] pr-px"><div className="w-[111px] border-b border-[#3c3c3c] bg-white" /></div>
      <div className="h-[29px] bg-[#646464] pt-px text-[#d6d6d6]">
        <NavRow label="縮放" value="106.5" position={59} curve="M0 7L55 0V7z" icons={["minusc", "plusc", "fitc", "fit", "corner"]} />
        <NavRow label="旋轉" value="0.0" position={50} curve="M0 0C10 7 20 7 27 4S45 0 55 7H0z" icons={["rotl", "rotr", "reset", "fliph", "flipv"]} />
      </div>
    </section>
  );
}

function Legend({ children }: { children: ReactNode }) {
  return (
    <div className="flex items-center gap-px leading-[10px] text-[#e4e4e4]">
      <span className="h-px w-[3px] bg-[#777]" />{children}<span className="h-px flex-1 bg-[#777]" />
    </div>
  );
}

function LayerPropertyPanel() {
  return (
    <section className="mt-[4px]">
      <TabRow className="h-[13px]">
        <Tab icon="layers" active className="w-[49px]">圖層屬性</Tab>
        <Tab icon="layers" className="w-[20px]" />
        <Tab icon="tone" className="w-[20px]" />
      </TabRow>
      <div className="flex h-[113px] bg-[#525252]">
        <div className="flex-1 pl-[3px]">
          <Legend>效果</Legend>
          <div className="ml-auto flex h-[14px] w-[68px] items-center justify-between rounded-[1px] border border-[#7c7c7c] bg-[#646464] px-[1px] text-[#c8c8c8]">
            <IconButton name="circle" label="邊界效果" icon="size-[11px]" />
            <IconButton name="tone" label="抽出線" icon="size-[10px]" />
            <IconButton name="checker" label="網點" icon="size-[10px]" />
            <IconButton name="layercolor" label="圖層顏色" icon="size-[10px]" />
            <IconButton name="updown" label="更多效果" icon="size-[8px]" />
          </div>
          <Legend>顯示顏色</Legend>
          <div className="relative mt-px ml-[8px] h-[14px] w-[104px]">
            <select aria-label="顯示顏色" className="size-full appearance-none rounded-[1px] border border-[#7c7c7c] bg-[#6a6a6a] pl-[46px] text-[#e4e4e4]">
              <option>彩色</option>
              <option>灰色</option>
            </select>
            <svg viewBox="0 0 12 12" className="pointer-events-none absolute top-[1px] left-[33px] size-[11px]" aria-hidden="true">
              <circle cx="6" cy="3.500" r="3.300" fill="#e0645c" />
              <circle cx="3.300" cy="8.300" r="3.300" fill="#6cc968" />
              <circle cx="8.700" cy="8.300" r="3.300" fill="#5ba2e0" />
              <circle cx="6" cy="6.500" r="1.500" fill="#eee" />
            </svg>
            <span className="pointer-events-none absolute top-[3px] right-0"><Icon name="updown" className="size-[8px] text-[#c8c8c8]" /></span>
          </div>
        </div>
        <div className="w-[11px] bg-[#585858]" />
      </div>
    </section>
  );
}

const CHECKER = "bg-[repeating-conic-gradient(#d4d4d4_0_25%,#fff_0_50%)] bg-[length:6px_6px]";

function LayerPanel() {
  return (
    <section className="mt-[3px] flex flex-1 flex-col">
      <TabRow className="h-[12px]">
        <Tab icon="layers" active className="w-[36px]">圖層</Tab>
        <Tab icon="history" className="w-[49px]">歷史記錄</Tab>
        <Tab icon="clap" className="w-[49px]">自動動作</Tab>
      </TabRow>
      <div className="bg-[#646464] text-[#c4c4c4]">
        <div className="flex h-[14px] items-center gap-[2px]">
          <button aria-label="調色盤顏色" className="flex h-[13px] w-[26px] items-center justify-between border border-[#858585] bg-[#6a6a6a] px-[2px]">
            <span className="h-[9px] w-[11px] border border-[#aaa]" />
            <Icon name="updown" className="size-[8px]" />
          </button>
          <div className="relative h-[13px] w-[51px]">
            <select aria-label="混合模式" className="size-full appearance-none border border-[#858585] bg-[#6a6a6a] pr-[8px] text-center text-[#e4e4e4]">
              <option>普通</option>
              <option>色彩增值</option>
            </select>
            <span className="pointer-events-none absolute top-[3px] right-px"><Icon name="updown" className="size-[8px]" /></span>
          </div>
          <input type="range" aria-label="不透明度" defaultValue={100} className={clsx("ml-[2px] h-[6px] w-[50px] appearance-none", CHECKER, NAV_THUMB)} />
          <input aria-label="不透明度數值" defaultValue="100" className={clsx("w-[16px] text-right text-[#e0e0e0]", NUM)} />
          <Icon name="updown" className="size-[8px]" />
        </div>
        <div className="flex h-[15px] items-center justify-end">
          {["clip", "lighthouse", "draft", "lock", "lockpx"].map((n) => (
            <IconButton key={n} name={n} label={n} className="w-[14px]" icon="size-[10px]" />
          ))}
          {["masksel", "rulersel"].map((n) => (
            <button key={n} aria-label={n} className="flex w-[24px] items-center justify-center gap-[2px] text-[#898989]">
              <Icon name={n} className="size-[11px]" /><Icon name="updown" className="size-[7px]" />
            </button>
          ))}
          <button aria-label="圖層顏色" className="flex h-[13px] w-[24px] items-center justify-center gap-[3px] border border-[#8ba3d2]">
            <svg viewBox="0 0 12 12" className="size-[11px]" aria-hidden="true">
              <path d="M5 5h6v6H5z" fill="#fff" />
              <path d="M1 1h7v7H1z" fill="#3d9cf5" stroke="#ddd" strokeWidth=".5" />
            </svg>
            <Icon name="updown" className="size-[7px]" />
          </button>
        </div>
        <div className="flex h-[16px] items-center">
          <IconButton name="split" label="雙層顯示" className="w-[14px]" icon="size-[11px]" />
          <div className="flex flex-1 justify-end gap-[1px] pr-px">
            {["newlayer", "newvec", "newfolder", "transfer", "transfer", "mask", "applymask", "trash"].map((n, i) => (
              <IconButton key={i} name={n} label={`圖層操作 ${i + 1}`} className={clsx("w-[12px]", (i === 3 || i === 6) && "text-[#808080]")} icon="size-[11px]" />
            ))}
          </div>
        </div>
      </div>
      <div className="flex flex-1 bg-[#525252]">
        <ul className="flex-1 text-[#e4e4e4]">
          <li className="flex h-[22px] border-b border-[#3a3a3a]">
            <IconButton name="eye" label="顯示圖層 1" className="w-[14px] border-r border-[#3a3a3a]" icon="size-[10px]" />
            <IconButton name="edit" label="編輯對象" className="w-[12px] border-r border-[#3a3a3a]" icon="size-[10px]" />
            <button className="flex flex-1 items-center gap-[4px] bg-[#717e95] pl-[3px] text-left leading-[9px]">
              <span className={clsx("h-[18px] w-[24px] border border-[#ddd] outline-1 outline-[#444]", CHECKER)} />
              <span>100 % 普通<br />圖層 1</span>
            </button>
          </li>
          <li className="flex h-[22px] border-b border-[#3a3a3a]">
            <IconButton name="eye" label="顯示紙張" className="w-[14px] border-r border-[#3a3a3a]" icon="size-[10px]" />
            <span className="flex w-[12px] items-center justify-center border-r border-[#3a3a3a]"><input type="checkbox" aria-label="選擇紙張" className="size-[7px] appearance-none rounded-[2px] border border-[#3f3f3f]" /></span>
            <button className="flex flex-1 items-center pl-[4px] text-left">
              <span className="h-[17px] w-[22px] bg-white outline-1 outline-[#444]" />
              <span className="ml-[8px] self-start bg-white text-[#333]"><Icon name="paper" className="size-[11px]" /></span>
              <span className="ml-[3px] self-end">紙張</span>
            </button>
          </li>
        </ul>
        <div className="w-[9px] bg-[#585858]" />
      </div>
    </section>
  );
}

export default function App() {
  return (
    <div className="flex h-screen flex-col overflow-hidden bg-[#4a4a4a] [font-family:Inter,'Noto_Sans_CJK_TC',sans-serif] text-[7px] leading-[11px] font-medium">
      <MenuBar />
      <div className="flex min-h-0 flex-1">
        <ToolColumn />
        <div className="ml-[2px] flex w-[138px] shrink-0 flex-col">
          <div className="flex h-[15px] shrink-0 items-center gap-[9px] px-[2px] text-[#8a8a8a]">
            <IconButton name="left2" label="收合" icon="size-[8px]" />
            <IconButton name="left" label="縮小" icon="size-[8px]" />
            <span className="ml-auto h-[8px] w-[4px] bg-[#6a6a6a]" />
          </div>
          <SubToolPanel />
          <ToolPropertyPanel />
          <BrushSizePanel />
          <ColorPanel />
          <div className="h-[2px] shrink-0" />
        </div>
        <div className="w-[5px] shrink-0 border-r border-[#3a3a3a] bg-[#464646]" />
        <Workspace />
        <div className="flex w-[191px] shrink-0 border-l-2 border-[#3c3c3c] pl-[2px]">
          <MaterialBar />
          <div className="flex min-w-0 flex-1 flex-col pr-px pl-px">
            <div className="flex h-[15px] shrink-0 items-center gap-[7px] text-[#8a8a8a]">
              <span className="mr-auto h-[8px] w-[4px] bg-[#6a6a6a]" />
              <IconButton name="right" label="放大" icon="size-[8px]" />
              <IconButton name="right2" label="收合" icon="size-[8px]" />
            </div>
            <NavigatorPanel />
            <LayerPropertyPanel />
            <LayerPanel />
          </div>
        </div>
        <div className="w-[2px] shrink-0 bg-linear-to-b from-[#9fbdde] from-45% via-[#7d8aa8] via-55% to-[#3b2a35]" />
      </div>
    </div>
  );
}
